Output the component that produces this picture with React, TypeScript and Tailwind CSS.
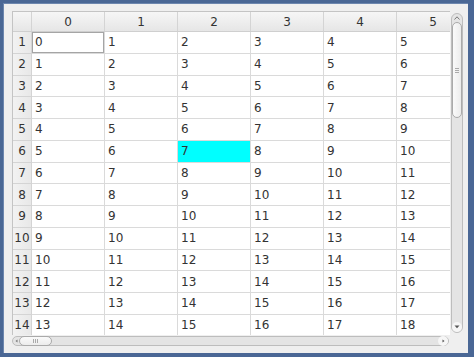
const COLS = [0, 1, 2, 3, 4, 5]
const ROWS = Array.from({ length: 14 }, (_, i) => i + 1)

function Cell({ r, c }: { r: number; c: number }) {
  const focused = r === 1 && c === 0
  const hit = r === 6 && c === 2
  return (
    <div
      className={`relative h-full shrink-0 border-r border-b border-[#dadada] pl-[3px] flex items-center ${
        c === 5 ? 'w-[73px]' : 'w-[73px]'
      } ${hit ? 'bg-[#00ffff]' : 'bg-white'}`}
    >
      {focused ? <div className="absolute inset-0 border border-[#a5a5a5]" /> : null}
      <span className="relative">{r - 1 + c}</span>
    </div>
  )
}

export default function App() {
  return (
    <div className="w-[474px] h-[357px] bg-[#4a6795] pl-[3px] pt-[3px] pr-[6px] pb-[4px] flex">
      <div className="flex-1 border-l border-t border-[#6c86ae] bg-[#efefef] pl-[8px] pt-[7px] pr-[3px] flex flex-col text-[12px] text-[#333] [font-family:'DejaVu_Sans',sans-serif]">
        <div className="flex">
          {/* table viewport */}
          <div className="w-[438px] h-[324px] overflow-hidden border-l border-t border-[#c4c4c4] bg-white">
            <div className="flex h-[20px] bg-gradient-to-b from-[#f6f6f6] to-[#e6e6e6] border-b border-[#cfcfcf]">
              <div className="w-[19px] shrink-0 border-r border-[#d4d4d4]" />
              {COLS.map((c) => (
                <div key={c} className="w-[73px] shrink-0 border-r border-[#d4d4d4] flex items-center justify-center">
                  {c}
                </div>
              ))}
            </div>
            {ROWS.map((r) => (
              <div key={r} className="flex h-[21.75px]">
                <div className="w-[19px] shrink-0 h-full border-r border-b border-[#d4d4d4] bg-gradient-to-r from-[#f2f2f2] to-[#e8e8e8] flex items-center justify-center">
                  {r}
                </div>
                {COLS.map((c) => (
                  <Cell key={c} r={r} c={c} />
                ))}
              </div>
            ))}
          </div>
          {/* vertical scrollbar */}
          <div className="ml-[1px] mt-[2px] w-[12px] h-[320px] rounded-full border border-[#bdbdbd] bg-[#e4e4e4] flex flex-col items-center">
            <div className="h-[8px] flex items-center justify-center text-[#666]">
              <svg width="6" height="4" viewBox="0 0 6 4"><path d="M0.5 3.5 L3 0.8 L5.5 3.5" fill="none" stroke="#777" strokeWidth="1" /></svg>
            </div>
            <div className="w-[10px] h-[96px] rounded-full border border-[#aaaaaa] bg-gradient-to-r from-[#fafafa] to-[#ececec] flex flex-col items-center justify-center gap-[1px]">
              <div className="w-[4px] h-px bg-[#aaa]" />
              <div className="w-[4px] h-px bg-[#aaa]" />
              <div className="w-[4px] h-px bg-[#aaa]" />
            </div>
            <div className="flex-1" />
            <div className="h-[10px] w-[10px] rounded-full bg-[#f6f6f6] flex items-center justify-center">
              <svg width="6" height="4" viewBox="0 0 6 4"><path d="M0.5 0.5 L3 3.2 L5.5 0.5 Z" fill="#555" /></svg>
            </div>
          </div>
        </div>
        {/* horizontal scrollbar */}
        <div className="mt-[1px] w-[437px] h-[10px] rounded-full border border-[#bdbdbd] bg-[#e4e4e4] flex items-center">
          <div className="w-[6px] h-full flex items-center justify-center">
            <svg width="3" height="4" viewBox="0 0 3 4"><path d="M2.5 0.5 L0.5 2 L2.5 3.5 Z" fill="#777" /></svg>
          </div>
          <div className="w-[33px] h-[10px] rounded-full border border-[#aaaaaa] bg-gradient-to-b from-[#fafafa] to-[#ececec] flex items-center justify-center gap-[1px]">
            <div className="w-px h-[4px] bg-[#aaa]" />
            <div className="w-px h-[4px] bg-[#aaa]" />
            <div className="w-px h-[4px] bg-[#aaa]" />
          </div>
          <div className="flex-1" />
          <div className="w-[10px] h-[10px] rounded-full bg-[#f6f6f6] flex items-center justify-center">
            <svg width="3" height="4" viewBox="0 0 3 4"><path d="M0.5 0.5 L2.5 2 L0.5 3.5 Z" fill="#555" /></svg>
          </div>
        </div>
      </div>
    </div>
  )
}
